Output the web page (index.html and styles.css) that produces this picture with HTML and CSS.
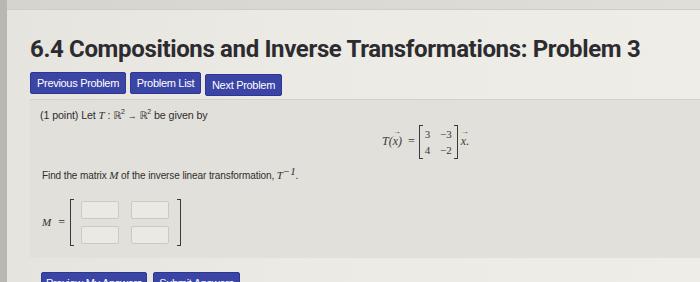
FILE: index.html
```html
<!DOCTYPE html>
<html lang="en">
<head>
    <meta charset="UTF-8">
    <meta name="viewport" content="width=device-width, initial-scale=1.0">
    <title>Problem 3</title>
    <link rel="stylesheet" href="styles.css">
</head>
<body>
    <div class="screen">
        <div class="top-band"></div>
        <div class="page">
            <h1>6.4 Compositions and Inverse Transformations: Problem 3</h1>
            <div class="nav">
                <button class="btn prev">Previous Problem</button>
                <button class="btn list">Problem List</button>
                <button class="btn next">Next Problem</button>
            </div>
            <div class="problem">
                <p class="line">(1 point) Let <i class="m">T</i> : <span class="bb">ℝ</span><sup>2</sup> <span class="arrow">→</span> <span class="bb">ℝ</span><sup>2</sup> be given by</p>
                <div class="display">
                    <span class="m">T</span><span class="m paren">(<span class="vec">x</span>)</span>
                    <span class="eq">=</span>
                    <span class="matrix">
                        <span class="bracket left"></span>
                        <span class="cells">
                            <span>3</span><span>−3</span>
                            <span>4</span><span>−2</span>
                        </span>
                        <span class="bracket right"></span>
                    </span>
                    <span class="m vec">x</span><span class="m">.</span>
                </div>
                <p class="line find">Find the matrix <i class="m">M</i> of the inverse linear transformation, <i class="m">T</i><sup class="m">−1</sup>.</p>
                <div class="answer">
                    <span class="m label">M</span>
                    <span class="eq wide-eq">=</span>
                    <span class="matrix big">
                        <span class="bracket left"></span>
                        <span class="inputs">
                            <input type="text">
                            <input type="text">
                            <input type="text">
                            <input type="text">
                        </span>
                        <span class="bracket right"></span>
                    </span>
                </div>
            </div>
            <div class="submit">
                <button class="btn">Preview My Answers</button>
                <button class="btn">Submit Answers</button>
            </div>
        </div>
    </div>
</body>
</html>
```

FILE: styles.css
```css
body {
    margin: 0;
    width: 700px;
    height: 282px;
    overflow: hidden;
    font-family: 'Liberation Sans', Arial, sans-serif;
    background: #e9e7e1;
}

.screen {
    height: 282px;
    border-left: 7px solid #b9b7b1;
    background: linear-gradient(90deg, #e6e4de 0%, #eceae4 40%, #efede7 100%);
}

.top-band {
    height: 9px;
    background: linear-gradient(90deg, #d6d4ce, #e0ded8);
    border-bottom: 1px solid #cfcdc7;
}

.page {
    padding: 0 0 0 23px;
}

h1 {
    margin: 24px 0 0 0;
    font-family: Roboto, 'Liberation Sans', sans-serif;
    font-size: 24px;
    font-weight: 700;
    color: #2c2c30;
    letter-spacing: -0.35px;
    line-height: 30px;
    white-space: nowrap;
}

.nav {
    display: flex;
    gap: 4px;
    margin-top: 8px;
}

.btn {
    height: 22px;
    padding: 0;
    border: 1px solid #2e3790;
    border-radius: 2px;
    background-color: #3b45a6;
    color: #ffffff;
    font-family: 'Liberation Sans', Arial, sans-serif;
    font-size: 11px;
    letter-spacing: -0.3px;
    cursor: pointer;
}

.prev {
    width: 96px;
}

.list {
    width: 71px;
}

.next {
    width: 77px;
    margin-top: 2px;
}

.problem {
    margin-top: 3px;
    height: 158px;
    background-color: #e2e0da;
    border-top: 1px solid #d4d2cc;
    padding: 0 10px;
    font-size: 10px;
    color: #2e2e2e;
}

.line {
    margin: 0;
    padding-top: 8px;
    font-size: 10.7px;
    letter-spacing: -0.1px;
}

.m {
    font-family: 'Liberation Serif', 'Times New Roman', serif;
    font-style: italic;
    font-size: 11px;
}

.bb {
    font-family: 'DejaVu Sans', sans-serif;
    font-size: 10px;
}

.arrow {
    font-size: 9px;
}

sup {
    font-size: 7px;
}

.display {
    display: flex;
    align-items: center;
    margin: 4px 0 0 342px;
    color: #3a3a3a;
}

.display .m {
    font-size: 12px;
}

.paren {
    margin-right: 2px;
}

.vec {
    position: relative;
}

.vec::before {
    content: "→";
    position: absolute;
    font-style: normal;
    font-size: 8px;
    left: 0;
    top: -7px;
}

.eq {
    font-family: 'Liberation Serif', serif;
    font-size: 12px;
    margin: 0 4px;
}

.wide-eq {
    margin: 0 5px 0 7px;
}

.matrix {
    display: flex;
    align-items: stretch;
}

.bracket {
    width: 3px;
    border: 1px solid #3a3a3a;
}

.bracket.left {
    border-right: none;
}

.bracket.right {
    border-left: none;
    margin-right: 3px;
}

.cells {
    display: grid;
    grid-template-columns: 8px 12px;
    column-gap: 7px;
    padding: 2px 2px;
    font-family: 'Liberation Serif', serif;
    font-size: 11px;
    line-height: 15px;
}

.display .cells {
    line-height: 16px;
    padding: 1px 2px;
}

.cells span:nth-child(even) {
    text-align: right;
}

.find {
    padding-top: 6px;
    padding-left: 2px;
    font-size: 10px;
}

.answer {
    display: flex;
    align-items: center;
    margin-top: 18px;
}

.label {
    margin-left: 2px;
}

.inputs {
    display: grid;
    grid-template-columns: 38px 38px;
    column-gap: 12px;
    row-gap: 7px;
    padding: 2px 8px 2px 7px;
}

.inputs input {
    width: 38px;
    height: 18px;
    box-sizing: border-box;
    border: 1px solid #cbc9c3;
    border-radius: 2px;
    background-color: #ebe9e4;
}

.submit {
    display: flex;
    gap: 6px;
    margin: 14px 0 0 11px;
}

.submit .btn:first-child {
    width: 106px;
}

.submit .btn:last-child {
    width: 87px;
}
```
